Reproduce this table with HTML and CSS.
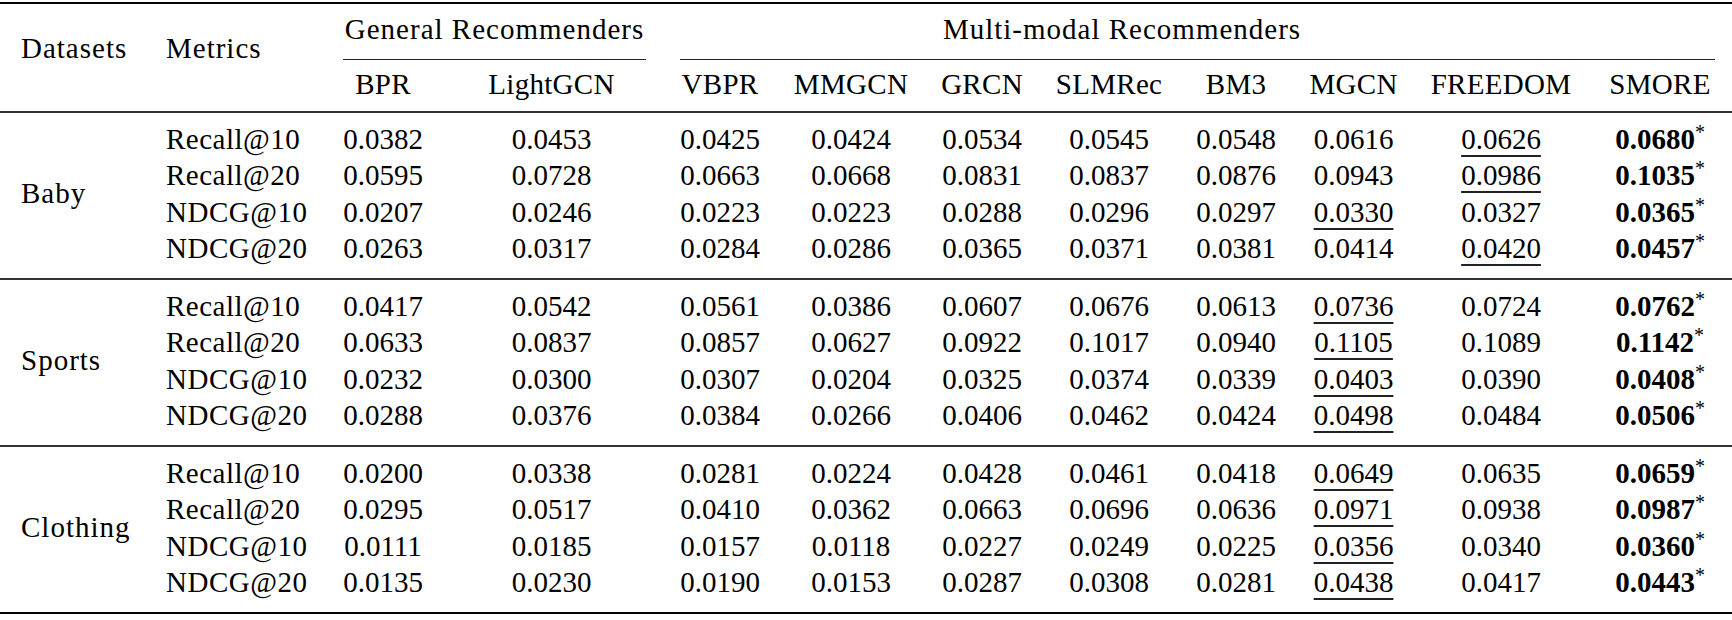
FILE: index.html
```html
<!DOCTYPE html>
<html lang="en">
<head>
<meta charset="utf-8">
<title>Results</title>
<link rel="stylesheet" href="styles.css">
</head>
<body>
<table class="results">
  <colgroup>
    <col class="c-ds"><col class="c-metric"><col class="c-bpr"><col class="c-lgcn">
    <col class="c-vbpr"><col class="c-mmgcn"><col class="c-grcn"><col class="c-slm">
    <col class="c-bm3"><col class="c-mgcn"><col class="c-free"><col class="c-smore">
  </colgroup>
  <thead>
    <tr class="hdr1">
      <th rowspan="2" class="ds">Datasets</th>
      <th rowspan="2" class="metric">Metrics</th>
      <th colspan="2" class="group"><div class="group-label">General Recommenders</div></th>
      <th colspan="8" class="group"><div class="group-label group-label-mm">Multi-modal Recommenders</div></th>
    </tr>
    <tr class="hdr2">
      <th>BPR</th><th>LightGCN</th><th>VBPR</th><th>MMGCN</th><th>GRCN</th><th>SLMRec</th><th>BM3</th><th>MGCN</th><th>FREEDOM</th><th>SMORE</th>
    </tr>
  </thead>
  <tbody>
    <tr class="first">
      <td rowspan="4" class="ds">Baby</td><td class="metric">Recall@10</td>
      <td>0.0382</td><td>0.0453</td><td>0.0425</td><td>0.0424</td><td>0.0534</td><td>0.0545</td><td>0.0548</td><td>0.0616</td><td><span class="second">0.0626</span></td><td><span class="best">0.0680</span><sup class="sig">*</sup></td>
    </tr>
    <tr>
      <td class="metric">Recall@20</td>
      <td>0.0595</td><td>0.0728</td><td>0.0663</td><td>0.0668</td><td>0.0831</td><td>0.0837</td><td>0.0876</td><td>0.0943</td><td><span class="second">0.0986</span></td><td><span class="best">0.1035</span><sup class="sig">*</sup></td>
    </tr>
    <tr>
      <td class="metric">NDCG@10</td>
      <td>0.0207</td><td>0.0246</td><td>0.0223</td><td>0.0223</td><td>0.0288</td><td>0.0296</td><td>0.0297</td><td><span class="second">0.0330</span></td><td>0.0327</td><td><span class="best">0.0365</span><sup class="sig">*</sup></td>
    </tr>
    <tr class="last">
      <td class="metric">NDCG@20</td>
      <td>0.0263</td><td>0.0317</td><td>0.0284</td><td>0.0286</td><td>0.0365</td><td>0.0371</td><td>0.0381</td><td>0.0414</td><td><span class="second">0.0420</span></td><td><span class="best">0.0457</span><sup class="sig">*</sup></td>
    </tr>
  </tbody>
  <tbody>
    <tr class="first">
      <td rowspan="4" class="ds">Sports</td><td class="metric">Recall@10</td>
      <td>0.0417</td><td>0.0542</td><td>0.0561</td><td>0.0386</td><td>0.0607</td><td>0.0676</td><td>0.0613</td><td><span class="second">0.0736</span></td><td>0.0724</td><td><span class="best">0.0762</span><sup class="sig">*</sup></td>
    </tr>
    <tr>
      <td class="metric">Recall@20</td>
      <td>0.0633</td><td>0.0837</td><td>0.0857</td><td>0.0627</td><td>0.0922</td><td>0.1017</td><td>0.0940</td><td><span class="second">0.1105</span></td><td>0.1089</td><td><span class="best">0.1142</span><sup class="sig">*</sup></td>
    </tr>
    <tr>
      <td class="metric">NDCG@10</td>
      <td>0.0232</td><td>0.0300</td><td>0.0307</td><td>0.0204</td><td>0.0325</td><td>0.0374</td><td>0.0339</td><td><span class="second">0.0403</span></td><td>0.0390</td><td><span class="best">0.0408</span><sup class="sig">*</sup></td>
    </tr>
    <tr class="last">
      <td class="metric">NDCG@20</td>
      <td>0.0288</td><td>0.0376</td><td>0.0384</td><td>0.0266</td><td>0.0406</td><td>0.0462</td><td>0.0424</td><td><span class="second">0.0498</span></td><td>0.0484</td><td><span class="best">0.0506</span><sup class="sig">*</sup></td>
    </tr>
  </tbody>
  <tbody class="final">
    <tr class="first">
      <td rowspan="4" class="ds">Clothing</td><td class="metric">Recall@10</td>
      <td>0.0200</td><td>0.0338</td><td>0.0281</td><td>0.0224</td><td>0.0428</td><td>0.0461</td><td>0.0418</td><td><span class="second">0.0649</span></td><td>0.0635</td><td><span class="best">0.0659</span><sup class="sig">*</sup></td>
    </tr>
    <tr>
      <td class="metric">Recall@20</td>
      <td>0.0295</td><td>0.0517</td><td>0.0410</td><td>0.0362</td><td>0.0663</td><td>0.0696</td><td>0.0636</td><td><span class="second">0.0971</span></td><td>0.0938</td><td><span class="best">0.0987</span><sup class="sig">*</sup></td>
    </tr>
    <tr>
      <td class="metric">NDCG@10</td>
      <td>0.0111</td><td>0.0185</td><td>0.0157</td><td>0.0118</td><td>0.0227</td><td>0.0249</td><td>0.0225</td><td><span class="second">0.0356</span></td><td>0.0340</td><td><span class="best">0.0360</span><sup class="sig">*</sup></td>
    </tr>
    <tr class="last">
      <td class="metric">NDCG@20</td>
      <td>0.0135</td><td>0.0230</td><td>0.0190</td><td>0.0153</td><td>0.0287</td><td>0.0308</td><td>0.0281</td><td><span class="second">0.0438</span></td><td>0.0417</td><td><span class="best">0.0443</span><sup class="sig">*</sup></td>
    </tr>
  </tbody>
</table>
</body>
</html>
```

FILE: styles.css
```css
html, body {
  margin: 0;
  padding: 0;
  background: #ffffff;
}

body {
  font-family: "Liberation Serif", "Times New Roman", Tinos, "DejaVu Serif", serif;
  font-size: 29px;
  color: #000000;
}

.results {
  font-family: "Liberation Serif", "Times New Roman", Tinos, "DejaVu Serif", serif;
  border-collapse: separate;
  border-spacing: 0;
  table-layout: fixed;
  width: 1732px;
  margin-top: 2px;
}

.c-ds { width: 149px; }
.c-metric { width: 177px; }
.c-bpr { width: 114px; }
.c-lgcn { width: 223px; }
.c-vbpr { width: 114px; }
.c-mmgcn { width: 148px; }
.c-grcn { width: 114px; }
.c-slm { width: 140px; }
.c-bm3 { width: 114px; }
.c-mgcn { width: 121px; }
.c-free { width: 174px; }
.c-smore { width: 144px; }

.results th,
.results td {
  padding: 0;
  line-height: 36.5px;
  font-weight: normal;
  white-space: nowrap;
  text-align: center;
  vertical-align: top;
}

/* header row 1 */
.hdr1 th {
  border-top: 2px solid #000;
}

.hdr1 th.ds,
.hdr1 th.metric {
  padding-top: 26px;
  border-bottom: 2px solid #333;
  text-align: left;
}

.results .ds {
  padding-left: 21px;
  text-align: left;
  letter-spacing: 1px;
}

.results .metric {
  padding-left: 17px;
  text-align: left;
  letter-spacing: 0.5px;
}

.results th.metric {
  letter-spacing: 1px;
}

.group-label {
  margin: 0 17px;
  padding: 7px 0 11px;
  border-bottom: 1px solid #222;
  letter-spacing: 1px;
}

.group-label-mm {
  padding-right: 151px;
}

/* header row 2 */
.hdr2 th {
  padding: 6.5px 0 8px;
  border-bottom: 2px solid #333;
  letter-spacing: 0.3px;
}

/* body groups */
.results tr.first td {
  padding-top: 8px;
}

.results tr.last td {
  padding-bottom: 11px;
  border-bottom: 2px solid #333;
}

.results td.ds {
  vertical-align: middle;
  padding-bottom: 11px;
  border-bottom: 2px solid #333;
}

.final tr.last td,
.final td.ds {
  border-bottom: 2px solid #000;
}

.second {
  text-decoration: underline;
  text-decoration-thickness: 2px;
  text-underline-offset: 6px;
  text-decoration-color: #222;
}

.best {
  font-weight: bold;
}

.sig {
  font-size: 20px;
  line-height: 0;
  vertical-align: 10px;
  font-weight: normal;
}
```
